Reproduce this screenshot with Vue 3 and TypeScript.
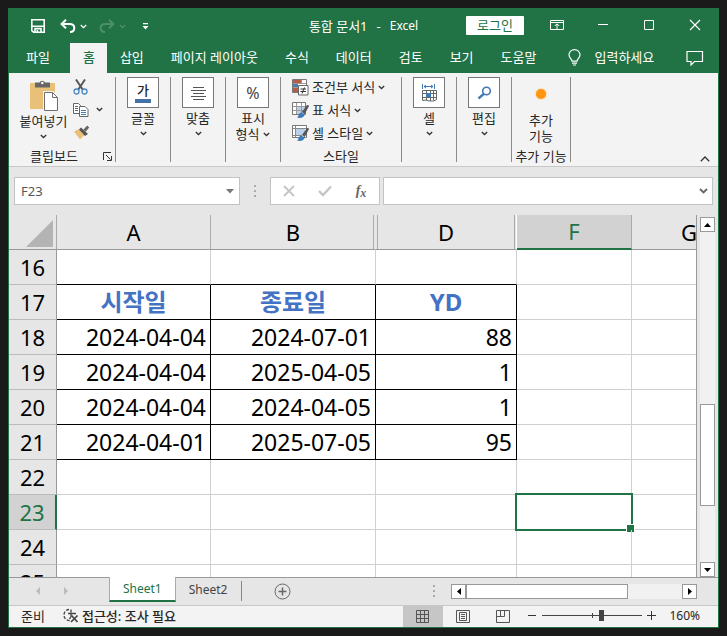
<script setup lang="ts">
import { ref } from 'vue'

interface SheetRow {
  n: number
  cells: [string, string, string]
}

const tabs = ['삽입', '페이지 레이아웃', '수식', '데이터', '검토', '보기', '도움말']

const columns = ['A', 'B', 'D', 'F', 'G']

const rows: SheetRow[] = [
  { n: 16, cells: ['', '', ''] },
  { n: 17, cells: ['시작일', '종료일', 'YD'] },
  { n: 18, cells: ['2024-04-04', '2024-07-01', '88'] },
  { n: 19, cells: ['2024-04-04', '2025-04-05', '1'] },
  { n: 20, cells: ['2024-04-04', '2024-04-05', '1'] },
  { n: 21, cells: ['2024-04-01', '2025-07-05', '95'] },
  { n: 22, cells: ['', '', ''] },
  { n: 23, cells: ['', '', ''] },
  { n: 24, cells: ['', '', ''] },
  { n: 25, cells: ['', '', ''] },
]

const selectedRow = 23
const selectedColumn = 'F'
const nameBox = ref('F23')
const formula = ref('')
const zoom = ref(60)
const activeSheet = ref('Sheet1')
</script>

<template>
  <div class="page">
    <div class="window">
      <header class="titlebar">
        <div class="quick">
          <button class="save" aria-label="저장">
            <svg width="16" height="16" viewBox="0 0 16 16" fill="none" stroke="#fff" stroke-width="1.6">
              <path d="M1.8 1.8h12.4v12.4H3.6L1.8 12.6zM2 8.3h12M5 14v-3.4h6V14M7.4 12v2" />
            </svg>
          </button>
          <button class="undo" aria-label="실행 취소">
            <svg width="16" height="14" viewBox="0 0 16 14" fill="none" stroke="#fff" stroke-width="2">
              <path d="M6 .8 1.6 5 6 9.2M2 5h7.5c3 0 4.8 1.600 4.800 4s-1.800 4-4.300 4" />
            </svg>
          </button>
          <button class="drop" aria-label="실행 취소 목록">
            <svg width="7" height="5" viewBox="0 0 7 5" fill="none" stroke="#fff" stroke-width="1.300"><path d="m.8 1 2.700 2.600L6.200 1" /></svg>
          </button>
          <button class="redo" aria-label="다시 실행">
            <svg width="16" height="14" viewBox="0 0 16 14" fill="none" stroke="#4b9069" stroke-width="2">
              <path d="m10 .8 4.400 4.200L10 9.200M14 5H6.500c-3 0-4.800 1.600-4.800 4s1.800 4 4.300 4" />
            </svg>
          </button>
          <button class="drop" aria-label="다시 실행 목록">
            <svg width="7" height="5" viewBox="0 0 7 5" fill="none" stroke="#4b9069" stroke-width="1.300"><path d="m.8 1 2.700 2.600L6.200 1" /></svg>
          </button>
          <button class="more" aria-label="빠른 실행 도구 모음 사용자 지정">
            <svg width="7" height="7" viewBox="0 0 7 7" fill="#fff"><path d="M1 0h5v1.200H1zM.5 3h6l-3 3.400z" /></svg>
          </button>
        </div>
        <h1 class="title"><span>통합 문서1</span><span>-</span><span class="latin">Excel</span></h1>
        <div class="controls">
          <button class="login">로그인</button>
          <button class="win" aria-label="리본 메뉴 표시 옵션">
            <svg width="14" height="12" viewBox="0 0 14 12" fill="none" stroke="#fff"><path d="M.5 1.500h13v9H.5zM.5 3.500h13M7 10V5M4.800 7 7 4.800 9.200 7" /></svg>
          </button>
          <button class="win" aria-label="최소화">
            <svg width="12" height="12" viewBox="0 0 12 12" stroke="#fff"><path d="M1 5.500h10" /></svg>
          </button>
          <button class="win" aria-label="최대화">
            <svg width="12" height="12" viewBox="0 0 12 12" fill="none" stroke="#fff"><path d="M1.500 1.500h9v9h-9z" /></svg>
          </button>
          <button class="win" aria-label="닫기">
            <svg width="12" height="12" viewBox="0 0 12 12" stroke="#fff" stroke-width="1.200"><path d="m1 1 10 10M11 1 1 11" /></svg>
          </button>
        </div>
      </header>

      <nav class="tabs">
        <button class="tab file">파일</button>
        <button class="tab home">홈</button>
        <button v-for="t in tabs" :key="t" class="tab">{{ t }}</button>
        <button class="tell">
          <svg width="13" height="17" viewBox="0 0 13 17" fill="none" stroke="#fff" stroke-width="1.200">
            <path d="M4 12.200c0-2.200-3-3.200-3-6.400a5.500 5.200 0 0 1 11 0c0 3.200-3 4.200-3 6.400zM4 14.200h5M5 16h3" />
          </svg>
          <span>입력하세요</span>
        </button>
        <button class="comment" aria-label="메모">
          <svg width="18" height="16" viewBox="0 0 18 16" fill="none" stroke="#fff" stroke-width="1.200"><path d="M1 1.500h15.500v10H8.500L5 15v-3.500H1z" /></svg>
        </button>
      </nav>

      <section class="ribbon">
        <div class="group clipboard">
          <div class="clip-body">
            <button class="paste">
              <svg width="30" height="32" viewBox="0 0 30 32">
                <path d="M1 3h25v26H1z" fill="#e9c078" />
                <path d="M6 2.500h4.500a3 3 0 0 1 5.500 0H21v5H6z" fill="#666" />
                <circle cx="13.300" cy="3" r="1.200" fill="#fff" />
                <path d="M14 11h10l6 6v15H14z" fill="#f3f3f3" />
                <path d="M15.500 12.500h8l5 5v13h-13z" fill="#fff" stroke="#707070" />
                <path d="M23.500 12.500v5h5" fill="none" stroke="#707070" />
              </svg>
              <span>붙여넣기</span>
              <svg class="chev" width="7" height="5" viewBox="0 0 7 5"><path d="m.8 1 2.700 2.500L6.200 1" /></svg>
            </button>
            <div class="clip-tools">
              <button aria-label="잘라내기">
                <svg width="15" height="16" viewBox="0 0 15 16" fill="none">
                  <path d="M3 .5 10 11M12 .5 5 11" stroke="#595959" stroke-width="2" />
                  <circle cx="3.500" cy="12.500" r="2.500" stroke="#4a86c2" stroke-width="1.300" />
                  <circle cx="11.500" cy="12.500" r="2.500" stroke="#4a86c2" stroke-width="1.300" />
                </svg>
              </button>
              <button aria-label="복사">
                <svg width="16" height="14" viewBox="0 0 16 14" fill="#fff" stroke="#666">
                  <path d="M.5.500h5l2 2v8h-7zM2 3.500h3M2 5.500h3M2 7.500h3" />
                  <path d="M6.500 3.500h5.500l3 3v7H6.500z" />
                  <path d="M8 7.500h5M8 9.500h5M8 11.500h5" stroke="#4a7fb0" />
                </svg>
                <svg class="chev" width="7" height="5" viewBox="0 0 7 5"><path d="m.8 1 2.700 2.500L6.200 1" /></svg>
              </button>
              <button aria-label="서식 복사">
                <svg width="17" height="15" viewBox="0 0 17 15">
                  <path d="m1 6.500 5-2.500 5.500 6L7 14.500z" fill="#e9c078" />
                  <path d="m6 4.500 2-2 7 6.500-3 2z" fill="#555" />
                  <path d="m10.500 4.500 3.700-4 2 2-3.500 4.200z" fill="#666" />
                </svg>
              </button>
            </div>
          </div>
          <div class="caption clip-caption">
            <span>클립보드</span>
            <button aria-label="클립보드 옵션">
              <svg width="9" height="9" viewBox="0 0 9 9" fill="none" stroke="#333"><path d="M.5 8V.5H8M3 3l4.500 4.500M8.500 4v4.500H4" /></svg>
            </button>
          </div>
        </div>

        <div class="group">
          <button class="tool">
            <span class="tile"><span class="font-mark">가</span></span>
            <span>글꼴</span>
            <svg class="chev" width="7" height="5" viewBox="0 0 7 5"><path d="m.8 1 2.700 2.500L6.200 1" /></svg>
          </button>
        </div>
        <div class="group">
          <button class="tool">
            <span class="tile">
              <svg width="17" height="14" viewBox="0 0 17 14" stroke="#555"><path d="M3 1.500h11M1 4.500h15M3 7.500h11M1 10.500h15M3 13.500h11" /></svg>
            </span>
            <span>맞춤</span>
            <svg class="chev" width="7" height="5" viewBox="0 0 7 5"><path d="m.8 1 2.700 2.500L6.200 1" /></svg>
          </button>
        </div>
        <div class="group">
          <button class="tool">
            <span class="tile percent">%</span>
            <span>표시</span>
            <span class="line">형식
              <svg class="chev" width="7" height="5" viewBox="0 0 7 5"><path d="m.8 1 2.700 2.500L6.200 1" /></svg>
            </span>
          </button>
        </div>

        <div class="group styles">
          <div class="style-list">
            <button>
              <svg width="17" height="17" viewBox="0 0 17 17" fill="none">
                <path d="M.5.500h14v13H.5z" fill="#fff" stroke="#777" />
                <path d="M1 1h8v3H1zM1 9h5v4H1z" fill="#b85b47" />
                <path d="M1 5h5v3H1z" fill="#4a7fb0" />
                <path d="M9.500 1v4M1 4.500h13M1 8.500h5" stroke="#999" />
                <path d="M6.500 6.500h9.500v9.500H6.500z" fill="#fff" stroke="#666" />
                <path d="M8.500 10h5.500M8.500 12.500h5.500M12.500 8.500l-2.500 6" stroke="#333" />
              </svg>
              <span>조건부 서식</span>
              <svg class="chev" width="7" height="5" viewBox="0 0 7 5"><path d="m.8 1 2.700 2.500L6.200 1" /></svg>
            </button>
            <button>
              <svg width="17" height="17" viewBox="0 0 17 17" fill="none">
                <path d="M.5.500h13v12H.5z" fill="#fff" stroke="#777" />
                <path d="M4 4h9v8H4z" fill="#b9d0e8" />
                <path d="M4.500 1v11M9.500 1v11M1 4.500h12M1 8.500h12" stroke="#999" />
                <path d="m15.500 3 1 1-4 7.500-2-1.500z" fill="#555" stroke="#555" />
                <path d="M5 15.500c2-1 1.500-5 4.500-5l3 2c0 3-4 4-7.500 3z" fill="#3d7ab8" />
              </svg>
              <span>표 서식</span>
              <svg class="chev" width="7" height="5" viewBox="0 0 7 5"><path d="m.8 1 2.700 2.500L6.200 1" /></svg>
            </button>
            <button>
              <svg width="17" height="17" viewBox="0 0 17 17" fill="none">
                <path d="M.5.500h14v12H.5z" fill="#fff" stroke="#777" />
                <path d="M4 4h9v6H4z" fill="#b9d0e8" />
                <path d="M3.500 1v11M1 3.500h13M1 10.500h9" stroke="#888" />
                <path d="m15.500 3 1 1-4 7.500-2-1.500z" fill="#555" stroke="#555" />
                <path d="M5 15.500c2-1 1.500-5 4.500-5l3 2c0 3-4 4-7.500 3z" fill="#3d7ab8" />
              </svg>
              <span>셀 스타일</span>
              <svg class="chev" width="7" height="5" viewBox="0 0 7 5"><path d="m.8 1 2.700 2.500L6.200 1" /></svg>
            </button>
          </div>
          <div class="caption">스타일</div>
        </div>

        <div class="group">
          <button class="tool">
            <span class="tile">
              <svg width="17" height="18" viewBox="0 0 17 18" fill="none">
                <path d="M1.500 0v5M13.500 0v5M3 2.500h9M5 1 3 2.500 5 4M10 1l2 1.500L10 4" stroke="#3f79b5" />
                <path d="M1.500 6.500h14v9l-3 1.500H8L5 16l-3.500.500zM1.500 9.500h14M1.500 13.500h14M5.500 6.500v10M9.500 6.500V17M12.500 6.500v10" stroke="#666" />
                <path d="M5 9h5v4H5z" fill="#3f79b5" />
              </svg>
            </span>
            <span>셀</span>
            <svg class="chev" width="7" height="5" viewBox="0 0 7 5"><path d="m.8 1 2.700 2.500L6.200 1" /></svg>
          </button>
        </div>
        <div class="group">
          <button class="tool">
            <span class="tile">
              <svg width="15" height="14" viewBox="0 0 15 14" fill="none" stroke="#3f79b5"><circle cx="9.500" cy="5" r="3.800" stroke-width="1.600" /><path d="M6.800 7.800 1.500 12.500" stroke-width="2.400" /></svg>
            </span>
            <span>편집</span>
            <svg class="chev" width="7" height="5" viewBox="0 0 7 5"><path d="m.8 1 2.700 2.500L6.200 1" /></svg>
          </button>
        </div>
        <div class="group addin">
          <button class="tool">
            <span class="dot-box"><span class="dot"></span></span>
            <span class="two-line">추가 기능</span>
          </button>
          <div class="caption">추가 기능</div>
        </div>
        <button class="collapse" aria-label="리본 메뉴 축소">
          <svg width="10" height="6" viewBox="0 0 10 6" fill="none" stroke="#333" stroke-width="1.300"><path d="M.8 5.200 5 1l4.200 4.200" /></svg>
        </button>
      </section>

      <section class="formula-bar">
        <div class="name-box">
          <input v-model="nameBox" type="text" aria-label="이름 상자" />
          <button aria-label="이름 목록"><svg width="8" height="5" viewBox="0 0 8 5" fill="#777"><path d="M0 0h8L4 4.500z" /></svg></button>
        </div>
        <svg class="grip" width="3" height="12" viewBox="0 0 3 12" fill="#aaa"><path d="M0 0h2v2H0zM0 5h2v2H0zM0 10h2v2H0z" /></svg>
        <div class="fx-box">
          <button aria-label="취소"><svg width="12" height="12" viewBox="0 0 12 12" stroke="#c4c4c4" stroke-width="1.800"><path d="m1 1 10 10M11 1 1 11" /></svg></button>
          <button aria-label="입력"><svg width="14" height="12" viewBox="0 0 14 12" fill="none" stroke="#c4c4c4" stroke-width="2.400"><path d="m1 6 4 4 8-8.500" /></svg></button>
          <button class="fx" aria-label="함수 삽입">f<small>x</small></button>
        </div>
        <div class="formula">
          <input v-model="formula" type="text" aria-label="수식 입력줄" />
          <button aria-label="수식 입력줄 확장"><svg width="9" height="6" viewBox="0 0 9 6" fill="none" stroke="#666" stroke-width="1.800"><path d="m1 1 3.500 3.500L8 1" /></svg></button>
        </div>
      </section>

      <main class="sheet">
        <div class="grid">
          <table>
            <colgroup>
              <col class="c-head" /><col class="c-a" /><col class="c-b" /><col class="c-d" /><col class="c-f" /><col class="c-f" />
            </colgroup>
            <thead>
              <tr>
                <th class="corner"><svg width="27" height="27" viewBox="0 0 27 27" fill="#b4b4b4"><path d="M27 0v27H0z" /></svg></th>
                <th v-for="c in columns" :key="c" scope="col" :class="['col', 'col-' + c, { active: c === selectedColumn }]">{{ c }}</th>
              </tr>
            </thead>
            <tbody>
              <tr v-for="r in rows" :key="r.n" :class="{ head: r.n === 17, boxed: r.n >= 17 && r.n <= 21, above: r.n === 16 }">
                <th scope="row" :class="{ active: r.n === selectedRow }">{{ r.n }}</th>
                <td v-for="(c, i) in r.cells" :key="i" class="data">{{ c }}</td>
                <td class="cell-f"><span v-if="r.n === selectedRow" class="selection"></span></td>
                <td></td>
              </tr>
            </tbody>
          </table>
        </div>
        <div class="vscroll">
          <button aria-label="위로 스크롤"><svg width="7" height="4" viewBox="0 0 7 4"><path d="M0 4h7L3.500 0z" /></svg></button>
          <div class="vtrack"><div class="vthumb"></div></div>
          <button aria-label="아래로 스크롤"><svg width="7" height="4" viewBox="0 0 7 4"><path d="M0 0h7L3.500 4z" /></svg></button>
        </div>
      </main>

      <div class="sheet-bar">
        <div class="sheet-nav">
          <button aria-label="이전 시트"><svg width="4" height="8" viewBox="0 0 4 8" fill="#bbb"><path d="M4 0v8L0 4z" /></svg></button>
          <button aria-label="다음 시트"><svg width="4" height="8" viewBox="0 0 4 8" fill="#bbb"><path d="M0 0v8l4-4z" /></svg></button>
        </div>
        <button v-for="s in ['Sheet1', 'Sheet2']" :key="s" :class="['sheet-tab', { current: s === activeSheet }]" @click="activeSheet = s">{{ s }}</button>
        <span class="divider"></span>
        <button class="add" aria-label="새 시트">
          <svg width="17" height="17" viewBox="0 0 17 17" fill="none" stroke="#666"><circle cx="8.500" cy="8.500" r="7.500" /><path d="M8.500 4.500v8M4.500 8.500h8" stroke-width="1.500" /></svg>
        </button>
        <svg class="bar-grip" width="3" height="12" viewBox="0 0 3 12" fill="#aaa"><path d="M0 0h2v2H0zM0 5h2v2H0zM0 10h2v2H0z" /></svg>
        <div class="hscroll">
          <button aria-label="왼쪽으로 스크롤"><svg width="4" height="7" viewBox="0 0 4 7"><path d="M4 0v7L0 3.500z" /></svg></button>
          <div class="htrack"><div class="hthumb"></div></div>
          <button aria-label="오른쪽으로 스크롤"><svg width="4" height="7" viewBox="0 0 4 7"><path d="M0 0v7l4-3.500z" /></svg></button>
        </div>
      </div>

      <footer class="status">
        <span class="ready">준비</span>
        <button class="access">
          <svg width="16" height="15" viewBox="0 0 16 15" fill="none" stroke="#444">
            <path d="M6 1.500a5.500 5.500 0 0 0 1 11" stroke-dasharray="3 1.500" stroke-width="1.300" />
            <path d="M8 1.500v3M5 5.500h8M8 5.500v3L6.500 11" stroke-width="1.300" />
            <path d="m8.500 7.500 6 6.500M14.500 7.500 8 14" stroke-width="1.700" />
          </svg>
          <span>접근성: 조사 필요</span>
        </button>
        <div class="views">
          <button class="on" aria-label="기본"><svg width="14" height="14" viewBox="0 0 14 14" fill="none" stroke="#555"><path d="M.5.500h12v12H.5zM.5 4.500h12M.5 8.500h12M4.500.500v12M8.500.500v12" /></svg></button>
          <button aria-label="페이지 레이아웃"><svg width="14" height="14" viewBox="0 0 14 14" fill="none" stroke="#555"><path d="M.5.500h13v12H.5zM3.500 2.500h7v8h-7zM5 4.500h4M5 6.500h4M5 8.500h4" /></svg></button>
          <button aria-label="페이지 나누기 미리 보기"><svg width="14" height="14" viewBox="0 0 14 14" fill="none" stroke="#555"><path d="M.5.500h13v12H.5zM4.500.500v6M.5 6.500h8V.5" /></svg></button>
        </div>
        <button class="step" aria-label="축소"><svg width="9" height="9" viewBox="0 0 9 9" stroke="#333"><path d="M0 4.500h8" /></svg></button>
        <input v-model="zoom" class="zoom" type="range" min="0" max="100" aria-label="확대/축소" />
        <button class="step" aria-label="확대"><svg width="9" height="9" viewBox="0 0 9 9" stroke="#333"><path d="M0 4.500h9M4.500 0v9" /></svg></button>
        <span class="percent-label">160%</span>
      </footer>
    </div>
  </div>
</template>

<style>
body {
  background: #1a1a1a;
}
</style>

<style scoped>
* {
  box-sizing: border-box;
}
.page {
  display: flex;
  height: 100vh;
  padding: 8px;
  background: #1a1a1a;
  font-family: 'Noto Sans', 'Noto Sans CJK KR', sans-serif;
  font-size: 13px;
  line-height: 16px;
  color: #262626;
}
.window {
  display: flex;
  flex: 1;
  flex-direction: column;
  min-width: 0;
  border: 1px solid #217346;
  background: #e6e6e6;
}
button {
  display: flex;
  align-items: center;
  justify-content: center;
  margin: 0;
  padding: 0;
  border: 0;
  background: none;
  color: inherit;
  font: inherit;
  white-space: nowrap;
}
svg {
  display: block;
  flex: none;
}
input {
  min-width: 0;
  margin: 0;
  border: 0;
  background: none;
  font: inherit;
  color: inherit;
  outline: 0;
}
.chev {
  fill: none;
  stroke: #333;
  stroke-width: 1.3;
}

/* Title bar */
.titlebar {
  display: grid;
  grid-template-columns: 1fr auto 1fr;
  flex: none;
  height: 34px;
  background: #217346;
  color: #fff;
}
.quick {
  display: flex;
  align-items: center;
  padding-left: 21px;
}
.undo {
  margin-left: 14px;
}
.drop {
  margin-left: 4px;
}
.redo {
  margin-left: 12px;
}
.more {
  margin-left: 16px;
}
.title {
  display: flex;
  align-items: center;
  gap: 9px;
  margin: 0;
  font-size: 13px;
  font-weight: 400;
}
.latin {
  font-size: 12px;
}
.controls {
  display: flex;
  align-items: flex-start;
  justify-content: flex-end;
}
.login {
  width: 58px;
  height: 19px;
  margin: 7px 10px 0 0;
  padding-bottom: 2px;
  border-radius: 1px;
  background: #fff;
  color: #217346;
}
.win {
  width: 46px;
  height: 31px;
}

/* Ribbon tabs */
.tabs {
  display: flex;
  flex: none;
  height: 30px;
  background: #217346;
  color: #fff;
}
.tab {
  padding: 0 14px 2px 13px;
}
.file {
  padding: 0 20px 2px 17px;
}
.home {
  padding: 0 12px 2px 13px;
  background: #f3f3f3;
  color: #217346;
  font-weight: 500;
}
.tell {
  gap: 13px;
  margin-left: 18px;
  padding-bottom: 2px;
}
.comment {
  margin-left: auto;
  padding-right: 14px;
}

/* Ribbon */
.ribbon {
  display: flex;
  flex: none;
  height: 94px;
  padding: 4px 0;
  border-bottom: 1px solid #c8c8c8;
  background: #f3f3f3;
}
.group {
  display: flex;
  flex-direction: column;
  align-items: center;
  width: 55px;
  border-right: 1px solid #8a8a8a;
}
.clipboard {
  width: 107px;
}
.clip-body {
  display: flex;
  flex: 1;
  align-self: stretch;
}
.paste {
  flex-direction: column;
  justify-content: flex-start;
  width: 69px;
  padding-top: 3px;
}
.paste span {
  margin: 1px 0 5px;
}
.clip-tools {
  display: flex;
  flex-direction: column;
  align-items: flex-start;
  gap: 8px;
  padding-top: 2px;
}
.clip-tools button {
  gap: 7px;
  height: 15px;
  margin-left: -5px;
}
.caption {
  margin-top: auto;
  line-height: 12px;
  white-space: nowrap;
}
.clip-caption {
  display: flex;
  align-self: stretch;
  justify-content: space-between;
  align-items: center;
  padding: 0 3px 0 21px;
}
.tool {
  flex-direction: column;
  justify-content: flex-start;
  line-height: 16px;
}
.tool > .chev {
  margin-top: 5px;
}
.tile {
  display: flex;
  align-items: center;
  justify-content: center;
  width: 32px;
  height: 31px;
  margin-bottom: 2px;
  border: 1px solid #777;
  background: #fff;
}
.font-mark {
  width: 16px;
  border-bottom: 4px solid #4472a8;
  line-height: 17px;
  text-align: center;
  font-weight: 500;
}
.percent {
  font-size: 16px;
  color: #444;
}
.line {
  display: flex;
  align-items: center;
  gap: 4px;
}
.styles {
  width: 121px;
}
.style-list {
  display: flex;
  flex-direction: column;
  align-self: stretch;
  gap: 7px;
  padding: 2px 0 0 11px;
}
.style-list button {
  justify-content: flex-start;
  gap: 3px;
  height: 16px;
}
.addin {
  width: 59px;
}
.dot-box {
  display: flex;
  align-items: center;
  justify-content: center;
  width: 32px;
  height: 33px;
  margin-bottom: 2px;
}
.two-line {
  width: 32px;
  white-space: normal;
}
.dot {
  width: 10px;
  height: 10px;
  border-radius: 50%;
  background: #ff9510;
  box-shadow: 0 0 2px #ffb050;
}
.collapse {
  align-self: flex-end;
  margin-left: auto;
  padding: 0 8px 0 0;
}

/* Formula bar */
.formula-bar {
  display: flex;
  flex: none;
  height: 48px;
  padding: 10px 5px;
}
.name-box,
.fx-box,
.formula {
  display: flex;
  border: 1px solid #c3c3c3;
  background: #fff;
}
.name-box {
  width: 226px;
  color: #555;
}
.name-box input,
.formula input {
  flex: 1;
  padding: 0 6px;
}
.name-box button,
.formula button {
  width: 18px;
}
.grip {
  align-self: center;
  margin: 0 13px 0 14px;
}
.fx-box {
  justify-content: space-around;
  width: 110px;
}
.fx-box button {
  width: 30px;
}
.fx-box .fx {
  font-family: 'Liberation Serif', serif;
  font-size: 14px;
  font-style: italic;
  font-weight: 700;
  color: #666;
}
.fx small {
  padding-top: 3px;
  font-size: 12px;
}
.formula {
  flex: 1;
  margin-left: 3px;
}

/* Worksheet */
.sheet {
  display: flex;
  flex: 1;
  min-height: 0;
}
.grid {
  flex: 1;
  min-width: 0;
  overflow: hidden;
  border-right: 1px solid #999;
}
table {
  width: 738px;
  table-layout: fixed;
  border-collapse: separate;
  border-spacing: 0;
  background: #fff;
  font-size: 23px;
  line-height: 34px;
  color: #000;
}
.c-head {
  width: 48px;
}
.c-a {
  width: 154px;
}
.c-b {
  width: 165px;
}
.c-d {
  width: 141px;
}
.c-f {
  width: 115px;
}
th,
td {
  height: 35px;
  padding: 0;
  border-right: 1px solid #d0d0d0;
  border-bottom: 1px solid #d0d0d0;
}
th {
  background: #e6e6e6;
  font-size: 22px;
  font-weight: 400;
}
thead th {
  border-bottom-color: #999;
  border-right-color: #aaa;
}
tbody th {
  border-right-color: #999;
  border-bottom-color: #bbb;
}
.corner svg {
  margin: 3px 0 0 17px;
}
.col-B {
  border-right-color: #e6e6e6;
  box-shadow: inset -1px 0 #e6e6e6, inset -2px 0 #aaa;
}
.col-D {
  border-right-color: #fff;
  box-shadow: inset 1px 0 #e6e6e6, inset 2px 0 #aaa, inset -1px 0 #e6e6e6, inset -2px 0 #aaa;
}
.col.active {
  border-bottom: 2px solid #217346;
  background: #d2d2d2;
  color: #217346;
}
.col.active,
.col-G {
  line-height: 33px;
}
tbody th.active {
  border-right: 2px solid #217346;
  background: #d2d2d2;
  color: #217346;
}
.data {
  padding-right: 4px;
  text-align: right;
}
.above .data {
  border-bottom-color: #000;
}
.boxed .data {
  border-right-color: #000;
  border-bottom-color: #000;
}
.head .data {
  padding: 0;
  text-align: center;
  font-size: 24px;
  font-weight: 700;
  color: #4472c4;
}
.cell-f {
  position: relative;
}
.selection {
  position: absolute;
  inset: -2px;
  border: 2px solid #217346;
}
.selection::after {
  content: '';
  position: absolute;
  right: -4px;
  bottom: -4px;
  width: 7px;
  height: 7px;
  border: 1px solid #fff;
  background: #217346;
}
.vscroll {
  display: flex;
  flex-direction: column;
  width: 21px;
  padding: 2px 3px 0;
}
.vscroll button,
.hscroll button {
  flex: none;
  width: 15px;
  height: 15px;
  border: 1px solid #999;
  background: #fff;
}
.vtrack {
  flex: 1;
  padding-top: 172px;
  background: #f1f1f1;
}
.vthumb {
  height: 102px;
  border: 1px solid #999;
  background: #fff;
}

/* Sheet tabs */
.sheet-bar {
  display: flex;
  flex: none;
  height: 28px;
  padding-right: 21px;
  font-size: 12px;
  color: #444;
  box-shadow: inset 0 1px #999;
}
.sheet-nav {
  display: flex;
  gap: 24px;
  width: 100px;
  padding-left: 27px;
}
.sheet-tab {
  height: 25px;
  padding: 0 13px;
}
.sheet-tab.current {
  border-right: 1px solid #aaa;
  border-bottom: 2px solid #217346;
  border-left: 1px solid #aaa;
  background: #fff;
  color: #217346;
}
.divider {
  width: 1px;
  height: 20px;
  margin-top: 4px;
  background: #888;
}
.add {
  margin-left: 32px;
}
.bar-grip {
  align-self: center;
  margin: 0 15px 0 auto;
}
.hscroll {
  display: flex;
  width: 246px;
  margin-top: 7px;
}
.htrack {
  flex: 1;
  height: 15px;
  background: #f1f1f1;
}
.hthumb {
  width: 75%;
  height: 15px;
  border: 1px solid #999;
  background: #fff;
}

/* Status bar */
.status {
  display: flex;
  flex: none;
  align-items: center;
  height: 22px;
  padding: 0 18px 2px 12px;
  border-top: 1px solid #c8c8c8;
  background: #f3f3f3;
}
.ready {
  margin-right: 18px;
}
.access {
  gap: 3px;
  font-weight: 500;
}
.views {
  display: flex;
  align-self: stretch;
  margin: 0 5px -2px auto;
}
.views button {
  width: 40px;
}
.views .on {
  background: #c6c6c6;
}
.zoom {
  width: 100px;
  height: 15px;
  margin: 0 5px;
  appearance: none;
  background:
    linear-gradient(#444, #444) 50px 5px / 1px 5px no-repeat,
    linear-gradient(#444, #444) 0 7px / 100% 1px no-repeat;
}
.zoom::-webkit-slider-thumb {
  appearance: none;
  width: 5px;
  height: 11px;
  background: #444;
}
.percent-label {
  margin-left: 13px;
  font-size: 12px;
}
</style>
